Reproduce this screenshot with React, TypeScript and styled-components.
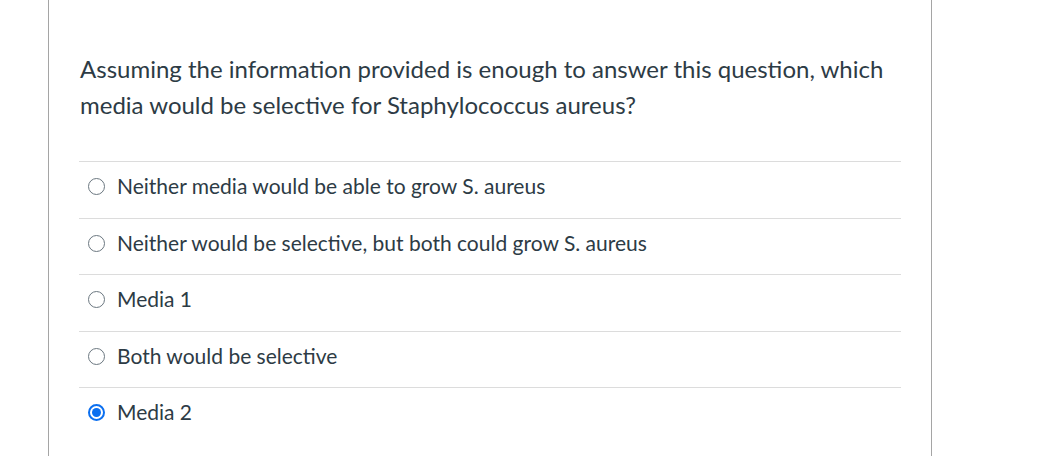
import React, { useState } from 'react';
import styled, { createGlobalStyle } from 'styled-components';

const GlobalStyle = createGlobalStyle`
    html, body {
        margin: 0;
        padding: 0;
        background: #ffffff;
    }
    body {
        font-family: Lato, "Open Sans", "Liberation Sans", sans-serif;
        color: #2d3b45;
    }
`;

const Card = styled.div`
    box-sizing: border-box;
    margin-left: 48px;
    width: 884px;
    height: 456px;
    border-left: 1px solid #a5a5a5;
    border-right: 1px solid #a5a5a5;
    padding: 51px 30px 0 31px;
`;

const Question = styled.p`
    margin: 0 0 38px;
    font-size: 24px;
    line-height: 36px;
    color: #2d3b45;
    max-width: 820px;
`;

const Answers = styled.div`
    display: flex;
    flex-direction: column;
    margin-left: -1px;
`;

const AnswerRow = styled.label`
    box-sizing: border-box;
    display: flex;
    align-items: center;
    gap: 12px;
    height: 56.5px;
    padding: 0 0 8px 9px;
    border-top: 1px solid #dcdcdc;
    font-size: 21px;
    color: #2d3b45;
    cursor: pointer;
`;

const RadioMark = styled.span<{ $checked: boolean }>`
    box-sizing: border-box;
    width: 17px;
    height: 17px;
    margin-top: 2px;
    border-radius: 50%;
    border: ${({ $checked }) => ($checked ? '2px solid #0b6ff0' : '1.5px solid #6b7780')};
    display: flex;
    align-items: center;
    justify-content: center;
    flex-shrink: 0;
    &::after {
        content: '';
        width: 9px;
        height: 9px;
        border-radius: 50%;
        background: #0b6ff0;
        display: ${({ $checked }) => ($checked ? 'block' : 'none')};
    }
`;

const answers = [
    'Neither media would be able to grow S. aureus',
    'Neither would be selective, but both could grow S. aureus',
    'Media 1',
    'Both would be selective',
    'Media 2',
];

const App = () => {
    const [selected, setSelected] = useState(4);

    return (
        <>
            <GlobalStyle />
            <Card>
                <Question>
                    Assuming the information provided is enough to answer this question, which media would be selective for Staphylococcus aureus?
                </Question>
                <Answers>
                    {answers.map((text, i) => (
                        <AnswerRow key={text} onClick={() => setSelected(i)}>
                            <RadioMark $checked={selected === i} />
                            {text}
                        </AnswerRow>
                    ))}
                </Answers>
            </Card>
        </>
    );
};

export default App;
